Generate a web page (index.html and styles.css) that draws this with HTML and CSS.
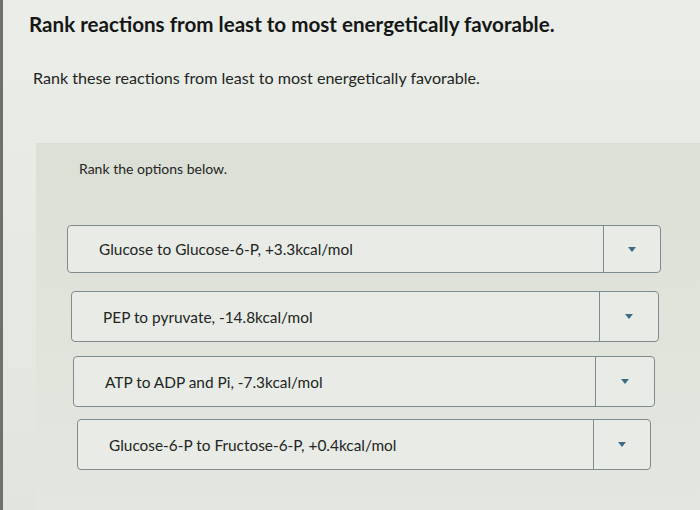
FILE: index.html
```html
<!DOCTYPE html>
<html>
<head>
<meta charset="utf-8">
<link rel="stylesheet" href="styles.css">
</head>
<body>
<div class="page">
  <h1 class="title">Rank reactions from least to most energetically favorable.</h1>
  <p class="prompt">Rank these reactions from least to most energetically favorable.</p>
  <div class="panel">
    <p class="instr">Rank the options below.</p>
    <div class="list">
      <div class="item item1">
        <div class="label">Glucose to Glucose-6-P, +3.3kcal/mol</div>
        <div class="drop"><span class="caret"></span></div>
      </div>
      <div class="item item2">
        <div class="label">PEP to pyruvate, -14.8kcal/mol</div>
        <div class="drop"><span class="caret"></span></div>
      </div>
      <div class="item item3">
        <div class="label">ATP to ADP and Pi, -7.3kcal/mol</div>
        <div class="drop"><span class="caret"></span></div>
      </div>
      <div class="item item4">
        <div class="label">Glucose-6-P to Fructose-6-P, +0.4kcal/mol</div>
        <div class="drop"><span class="caret"></span></div>
      </div>
    </div>
  </div>
</div>
</body>
</html>
```
FILE: styles.css
```css
html, body {
  margin: 0;
  padding: 0;
  height: 100%;
}
body {
  background: #e7eae3;
  font-family: Lato, "Liberation Sans", sans-serif;
  color: #1f2220;
  overflow: hidden;
}
.page {
  height: 510px;
  border-left: 3px solid #6f716b;
  box-sizing: border-box;
  background: linear-gradient(180deg, #ebede8 0%, #e6e9e2 60%, #e2e5dd 100%);
  padding-top: 10px;
}
.title {
  margin: 0 0 0 26px;
  font-size: 20.6px;
  font-weight: 700;
  line-height: 28px;
  color: #151716;
}
.prompt {
  margin: 30px 0 0 30px;
  font-size: 16.1px;
  line-height: 20px;
  color: #222523;
}
.panel {
  margin: 55px 0 0 33px;
  background: linear-gradient(180deg, #dcdfd5 0%, #e0e3da 40%, #e4e7e0 100%);
  height: 380px;
  padding: 17px 0 0 0;
  box-sizing: border-box;
}
.instr {
  margin: 0 0 0 43px;
  font-size: 14px;
  line-height: 18px;
  color: #222523;
}
.list {
  display: flex;
  flex-direction: column;
  margin-top: 47px;
}
.item {
  display: flex;
  height: 51px;
  border: 1.5px solid #7f8c8f;
  border-radius: 4px;
  background: #e9ece6;
  box-sizing: border-box;
}
.item1 { margin-left: 31px; margin-right: 39px; height: 48px; }
.item2 { margin-left: 35px; margin-right: 41px; margin-top: 18px; }
.item3 { margin-left: 37px; margin-right: 45px; margin-top: 14px; }
.item4 { margin-left: 41px; margin-right: 49px; margin-top: 12px; }
.label {
  flex: 1;
  display: flex;
  align-items: center;
  padding-left: 31px;
  font-size: 15.4px;
  color: #222523;
}
.drop {
  width: 56px;
  border-left: 1.5px solid #7f8c8f;
  display: flex;
  align-items: center;
  justify-content: center;
}
.item2 .drop, .item3 .drop { width: 58px; }
.caret {
  width: 0;
  height: 0;
  border-left: 4.5px solid transparent;
  border-right: 4.5px solid transparent;
  border-top: 5px solid #3d6a84;
}
```
